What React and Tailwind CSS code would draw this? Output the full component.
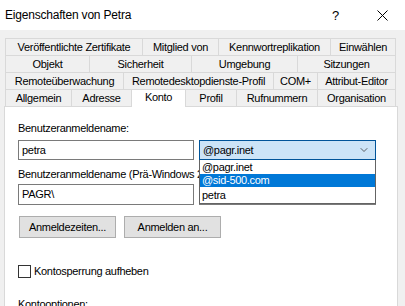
import { ChevronDown } from "lucide-react"

const rows = [
  [
    ["Veröffentlichte Zertifikate", 137],
    ["Mitglied von", 76],
    ["Kennwortreplikation", 112],
    ["Einwählen", 66],
  ],
  [
    ["Objekt", 84],
    ["Sicherheit", 102],
    ["Umgebung", 106],
    ["Sitzungen", 99],
  ],
  [
    ["Remoteüberwachung", 118],
    ["Remotedesktopdienste-Profil", 150],
    ["COM+", 44],
    ["Attribut-Editor", 79],
  ],
]

const lastRow = [
  ["Allgemein", 66],
  ["Adresse", 60],
  ["Konto", 54, true],
  ["Profil", 51],
  ["Rufnummern", 81],
  ["Organisation", 79],
]

function Tab({ label, width, active }) {
  return (
    <div
      className={
        "h-[17px] shrink-0 flex items-center justify-center border-l border-t border-[#d9d9d9] first:border-l last:border-r " +
        (active ? "bg-white relative z-10 -mb-px h-[18px] items-start pt-[1px]" : "bg-[#f0f0f0]")
      }
      style={{ width }}
    >
      {label}
    </div>
  )
}

export default function App() {
  return (
    <div className="w-[405px] h-[306px] overflow-hidden bg-[#f0f0f0] text-black font-['Liberation_Sans',Arial,sans-serif] text-[11px] tracking-[-0.3px] leading-[13px]">
      {/* Title bar */}
      <div className="h-[30px] bg-white flex items-center pl-[5px] text-[12px] tracking-[-0.2px]">
        <span>Eigenschaften von Petra</span>
        <span className="ml-auto mr-[38px] text-[13px]">?</span>
        <svg className="mr-[17px]" width="11" height="11" viewBox="0 0 11 11">
          <path d="M0.5 0.5L10.5 10.5M10.5 0.5L0.5 10.5" stroke="#000" strokeWidth="1" />
        </svg>
      </div>

      {/* Tabs */}
      <div className="pt-[8px] pl-[5px]">
        {rows.map((row, i) => (
          <div key={i} className="flex">
            {row.map(([label, w]) => (
              <Tab key={label} label={label} width={w} />
            ))}
          </div>
        ))}
        <div className="flex items-start">
          {lastRow.map(([label, w, active]) => (
            <Tab key={label} label={label} width={w} active={active} />
          ))}
        </div>
      </div>

      {/* Panel */}
      <div className="ml-[4px] w-[394px] h-[220px] bg-white border border-[#d9d9d9] pl-[13px] pt-[15px] relative">
        <div>Benutzeranmeldename:</div>
        <div className="flex gap-[5px] mt-[5px]">
          <div className="w-[176px] h-[20px] border border-[#7a7a7a] flex items-center pl-[3px]">petra</div>
          <div className="relative w-[177px]">
            <div className="h-[20px] bg-[#cce4f7] border border-[#005499] flex items-center pl-[3px] pr-[5px]">
              <span>@pagr.inet</span>
              <ChevronDown className="ml-auto text-[#333]" size={12} strokeWidth={1.5} />
            </div>
            <div className="absolute left-0 top-[20px] w-[177px] bg-white border border-[#646464] border-t-0 z-20 pt-px">
              <div className="h-[13px] pl-[2px] flex items-center">@pagr.inet</div>
              <div className="h-[13px] pl-[2px] flex items-center bg-[#0078d7] text-white">@sid-500.com</div>
              <div className="h-[16px] pl-[2px] flex items-center">petra</div>
            </div>
          </div>
        </div>

        <div className="mt-[8px] whitespace-nowrap">Benutzeranmeldename (Prä-Windows 2000):</div>
        <div className="flex gap-[5px] mt-[3px]">
          <div className="w-[176px] h-[21px] border border-[#7a7a7a] flex items-center pl-[3px]">PAGR\</div>
          <div className="w-[177px] h-[21px] border border-[#7a7a7a] flex items-center pl-[3px]">petra</div>
        </div>

        <div className="flex gap-[8px] mt-[11px] ml-px">
          <button className="w-[97px] h-[22px] bg-[#e1e1e1] border border-[#adadad]">Anmeldezeiten...</button>
          <button className="w-[97px] h-[22px] bg-[#e1e1e1] border border-[#adadad]">Anmelden an...</button>
        </div>

        <div className="flex items-center mt-[27px]">
          <div className="w-[13px] h-[13px] border border-[#333] bg-white" />
          <span className="ml-[3px]">Kontosperrung aufheben</span>
        </div>

        <div className="mt-[20px]">Kontooptionen:</div>
      </div>
    </div>
  )
}
